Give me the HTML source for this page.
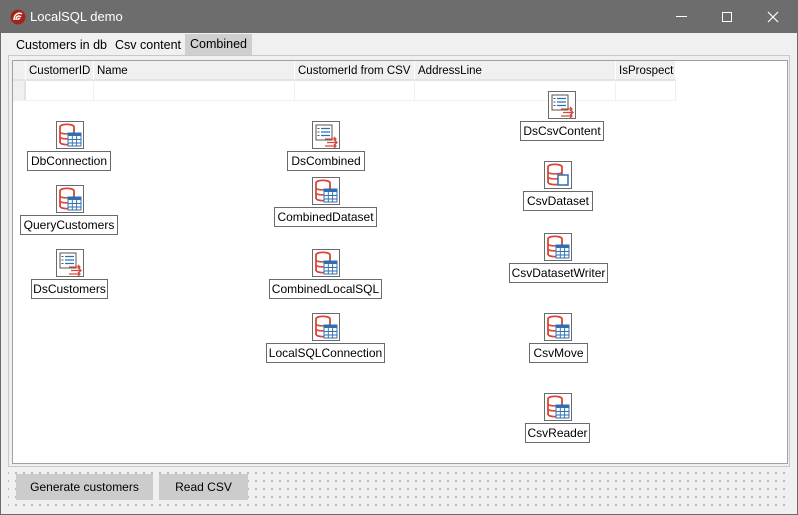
<!DOCTYPE html>
<html><head><meta charset="utf-8"><style>
*{margin:0;padding:0;box-sizing:border-box}
body{width:798px;height:515px;background:#fff;font-family:"Liberation Sans",Arial,sans-serif;font-size:12px;color:#000;position:relative;overflow:hidden}
.abs{position:absolute}
.win{left:0;top:0;width:798px;height:515px;border:1px solid #6b6b6b;background:#f0f0f0}
.title{left:0;top:0;width:798px;height:33px;background:#6d6d6d;color:#fff;font-size:13px}
.tab{top:35px;height:20px;line-height:20px;padding:0 5px;font-size:12.5px;white-space:nowrap}
.grid{left:12px;top:60px;width:776px;height:404px;border:1px solid #a0a0a0;background:#fff}
.hc{top:0;height:20px;line-height:21px;background:#f0f0f0;border-right:1px solid #fff;border-bottom:2px solid #e3e3e3;padding-left:3px;font-size:11.5px;white-space:nowrap;overflow:hidden}
.dc{top:20px;height:20px;border-right:1px solid #f0f0f0;border-bottom:1px solid #f0f0f0}
.ic{width:28px;height:28px;border:1px solid #6a6a6a;background:#fff}
.ic svg{position:absolute;left:0;top:0}
.lb{height:20px;line-height:18px;border:1px solid #6a6a6a;background:#fff;text-align:center;font-size:12px;white-space:nowrap}
.bottom{left:8px;top:467px;width:782px;height:42px;background-color:#f0f0f0;background-image:radial-gradient(circle,#333 0.6px,transparent 0.8px);background-size:8px 8px;background-position:4px 2px}
.btn{top:474px;height:26px;line-height:26px;background:#cccccc;text-align:center;font-size:12px}
</style></head><body>
<div class="abs win"></div>
<div class="abs title">
 <svg class="abs" style="left:10px;top:9px" width="16" height="16" viewBox="0 0 16 16"><circle cx="8" cy="8" r="7.5" fill="#a5221d"/><path d="M4 11 C4 5 9 3 12 5 M6 11 C6 7 9 6 11 8 M8 11 C8 9 9 9 10 10" stroke="#fff" stroke-width="1.5" fill="none"/></svg>
 <div class="abs" style="left:30px;top:9px">LocalSQL demo</div>
 <div class="abs" style="left:676px;top:16px;width:11px;height:1px;background:#fff"></div>
 <div class="abs" style="left:722px;top:12px;width:10px;height:10px;border:1px solid #fff"></div>
 <svg class="abs" style="left:767px;top:11px" width="12" height="12"><path d="M1 1L11 11M11 1L1 11" stroke="#fff" stroke-width="1.2"/></svg>
</div>
<div class="abs tab" style="left:11px">Customers in db</div>
<div class="abs tab" style="left:110px">Csv content</div>
<div class="abs tab" style="left:185px;background:#cfcfcf;top:34px;height:21px">Combined</div>
<div class="abs" style="left:8px;top:55px;width:782px;height:412px;border:1px solid #c8c8c8;background:#f0f0f0"></div>
<div class="abs grid">
 <div class="abs hc" style="left:0;width:13px"></div>
 <div class="abs hc" style="left:13px;width:68px">CustomerID</div>
 <div class="abs hc" style="left:81px;width:201px">Name</div>
 <div class="abs hc" style="left:282px;width:120px">CustomerId from CSV</div>
 <div class="abs hc" style="left:402px;width:201px">AddressLine</div>
 <div class="abs hc" style="left:603px;width:60px">IsProspect</div>
 <div class="abs dc" style="left:0;width:13px;background:#f0f0f0;border-right:2px solid #e3e3e3"></div>
 <div class="abs dc" style="left:13px;width:68px"></div>
 <div class="abs dc" style="left:81px;width:201px"></div>
 <div class="abs dc" style="left:282px;width:120px"></div>
 <div class="abs dc" style="left:402px;width:201px"></div>
 <div class="abs dc" style="left:603px;width:60px"></div>
</div>

<svg width="0" height="0" style="position:absolute"><defs>
<g id="db"><path d="M3 5 C3 1.5 17 1.5 17 5 V20 C17 23.5 3 23.5 3 20 Z" fill="none" stroke="#d9473b" stroke-width="1.8"/><path d="M3 10 C3 12.5 17 12.5 17 10 M3 15 C3 17.5 17 17.5 17 15" stroke="#d9473b" stroke-width="1.6" fill="none"/></g>
<g id="grid"><rect x="11" y="11" width="13" height="13" fill="#fff" stroke="#2d6fb5"/><rect x="11" y="11" width="13" height="3" fill="#2d6fb5"/><path d="M11 17.5H24M11 21H24M15.3 14V24M19.6 14V24" stroke="#2d6fb5" stroke-width="0.9"/></g>
<g id="ds"><rect x="3" y="3" width="16" height="15" fill="#fff" stroke="#555"/><path d="M8 6.5H17M8 10H17M8 13.5H17" stroke="#2d6fb5" stroke-width="1.3"/><path d="M4.5 6.5H6.5M4.5 10H6.5M4.5 13.5H6.5" stroke="#555"/><path d="M12 17L23 17M14 20.5L24 20.5M12 24L23 24M21 15L23 17L21 19M22 18.5L24 20.5L22 22.5M21 22L23 24L21 26" stroke="#d9473b" stroke-width="1.3" fill="none"/></g>
</defs></svg>

<div class="abs ic" style="left:56px;top:121px"><svg width="26" height="26"><use href="#db"/><use href="#grid"/></svg></div>
<div class="abs lb" style="left:27px;top:151px;width:84px">DbConnection</div>
<div class="abs ic" style="left:56px;top:185px"><svg width="26" height="26"><use href="#db"/><use href="#grid"/></svg></div>
<div class="abs lb" style="left:20px;top:215px;width:98px">QueryCustomers</div>
<div class="abs ic" style="left:56px;top:249px"><svg width="26" height="26"><use href="#ds"/></svg></div>
<div class="abs lb" style="left:31px;top:279px;width:77px">DsCustomers</div>

<div class="abs ic" style="left:312px;top:121px"><svg width="26" height="26"><use href="#ds"/></svg></div>
<div class="abs lb" style="left:287px;top:151px;width:78px">DsCombined</div>
<div class="abs ic" style="left:312px;top:177px"><svg width="26" height="26"><use href="#db"/><use href="#grid"/></svg></div>
<div class="abs lb" style="left:274px;top:207px;width:103px">CombinedDataset</div>
<div class="abs ic" style="left:312px;top:249px"><svg width="26" height="26"><use href="#db"/><use href="#grid"/></svg></div>
<div class="abs lb" style="left:269px;top:279px;width:113px">CombinedLocalSQL</div>
<div class="abs ic" style="left:312px;top:313px"><svg width="26" height="26"><use href="#db"/><use href="#grid"/></svg></div>
<div class="abs lb" style="left:266px;top:343px;width:119px">LocalSQLConnection</div>

<div class="abs ic" style="left:548px;top:91px"><svg width="26" height="26"><use href="#ds"/></svg></div>
<div class="abs lb" style="left:520px;top:121px;width:84px">DsCsvContent</div>
<div class="abs ic" style="left:544px;top:161px"><svg width="26" height="26"><use href="#db"/><rect x="13" y="13" width="10" height="10" fill="#fff" stroke="#2d6fb5" stroke-width="1.5"/></svg></div>
<div class="abs lb" style="left:523px;top:191px;width:70px">CsvDataset</div>
<div class="abs ic" style="left:544px;top:233px"><svg width="26" height="26"><use href="#db"/><use href="#grid"/></svg></div>
<div class="abs lb" style="left:509px;top:263px;width:99px">CsvDatasetWriter</div>
<div class="abs ic" style="left:544px;top:313px"><svg width="26" height="26"><use href="#db"/><use href="#grid"/></svg></div>
<div class="abs lb" style="left:529px;top:343px;width:59px">CsvMove</div>
<div class="abs ic" style="left:544px;top:393px"><svg width="26" height="26"><use href="#db"/><use href="#grid"/></svg></div>
<div class="abs lb" style="left:525px;top:423px;width:65px">CsvReader</div>

<div class="abs bottom"></div>
<div class="abs btn" style="left:16px;width:137px">Generate customers</div>
<div class="abs btn" style="left:159px;width:89px">Read CSV</div>
</body></html>
